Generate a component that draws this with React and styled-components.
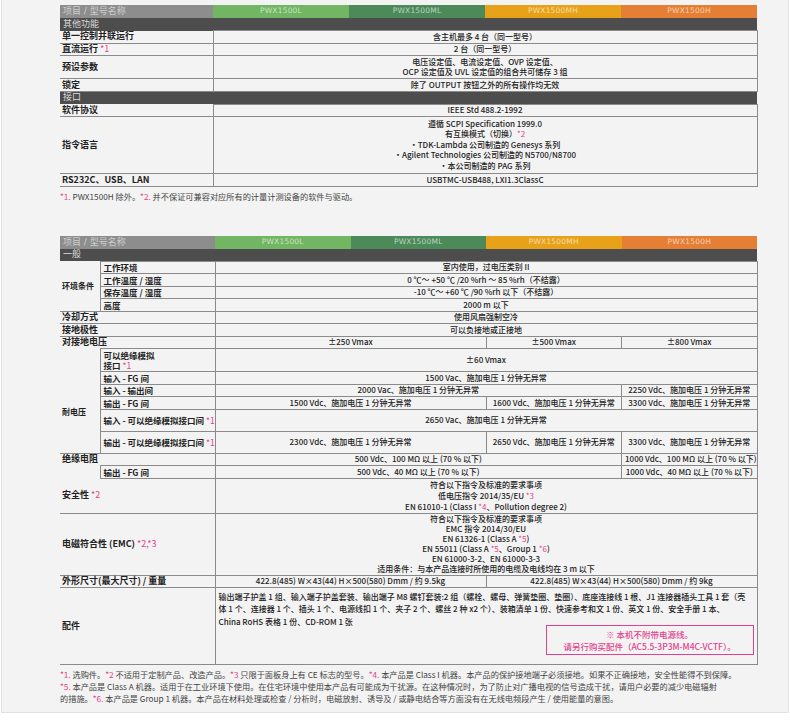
import React from 'react'
import styled, { createGlobalStyle } from 'styled-components'

const GlobalStyle = createGlobalStyle`
  html, body {
    margin: 0;
    background: #fff;
  }
  body {
    font-family: "Noto Sans CJK SC", "Noto Sans", sans-serif;
    color: #222;
  }
`

const LINE = '#8a8a8a'
const PINK = '#e4408c'

const Page = styled.div`
  box-sizing: border-box;
  width: 788px;
  min-height: 708px;
  margin-left: 1px;
  padding: 5px 0 8px 58px;
  background: #f3f3f3;
  border: 1px solid #e2e2e2;
  border-top: none;
`

const Spec = styled.table`
  width: 697px;
  table-layout: fixed;
  border-collapse: collapse;
  font-size: 9px;
  line-height: 10.5px;
  margin-top: ${p => p.$gap || 0}px;
`

const Col = styled.col`
  width: ${p => p.$w}px;
`

const Head = styled.th`
  height: 13px;
  padding: 0 3px;
  background: ${p => p.$bg};
  color: ${p => p.$fg || 'rgba(255, 255, 255, 0.62)'};
  font-family: "DejaVu Sans", "Noto Sans CJK SC", sans-serif;
  font-size: ${p => (p.$left ? 9 : 7.5)}px;
  font-weight: 400;
  letter-spacing: ${p => (p.$left ? 0 : 0.2)}px;
  text-align: ${p => (p.$left ? 'left' : 'center')};
`

const Section = styled.td`
  height: 12px;
  padding: 0 3px;
  background: #4d4d4d;
  color: #dcdcdc;
  font-weight: 400;
`

const Label = styled.td`
  padding: 0.5px 2px;
  font-weight: 700;
  font-size: ${p => (p.$group ? 8 : 9)}px;
  text-align: left;
  white-space: nowrap;
  vertical-align: middle;
  border-bottom: ${p => (p.$open ? 'none' : `1px solid ${LINE}`)};
  border-right: 1px solid ${LINE};
`

const Blank = styled.td`
  padding: 0;
`

const SubLabel = styled.td`
  height: ${p => p.$h || 'auto'};
  padding: 0.5px 3px;
  font-size: 8.5px;
  font-weight: 700;
  text-align: left;
  white-space: nowrap;
  border: 1px solid ${LINE};
`

const Value = styled.td`
  height: ${p => p.$h || 'auto'};
  padding: 0.5px 3px;
  font-size: 8px;
  font-weight: 500;
  text-align: ${p => (p.$left ? 'left' : 'center')};
  vertical-align: ${p => (p.$top ? 'top' : 'middle')};
  line-height: ${p => p.$lh || '10.5px'};
  border: 1px solid ${LINE};
  white-space: nowrap;
`

const Mark = styled.span`
  color: ${PINK};
  font-weight: 400;
`

const Notes = styled.div`
  width: 697px;
  margin-top: ${p => p.$gap}px;
  font-size: 8.2px;
  line-height: 12px;
  color: #444;
  white-space: nowrap;
`

const Line = styled.div``

const Accessory = styled.div`
  display: flex;
  flex-direction: column;
  padding: 2px 0 8px;
  line-height: 12.5px;
`

const Notice = styled.div`
  align-self: flex-end;
  width: 206px;
  margin: -3px 0 0;
  padding: 2px 0;
  border: 1px solid ${PINK};
  color: ${PINK};
  font-size: 8.5px;
  text-align: center;
  line-height: 12px;
`

const models = [
  { name: 'PWX1500L', bg: '#72b663' },
  { name: 'PWX1500ML', bg: '#4c8a5a' },
  { name: 'PWX1500MH', bg: '#e8a219' },
  { name: 'PWX1500H', bg: '#e57f35' },
]

const HeaderRow = () => (
  <tr>
    <Head colSpan={2} $bg="#8d8d8d" $fg="#cdcdcd" $left>
      项目 / 型号名称
    </Head>
    {models.map(m => (
      <Head key={m.name} $bg={m.bg}>
        {m.name}
      </Head>
    ))}
  </tr>
)

const Cols = ({ sub }) => (
  <colgroup>
    <Col $w={40} />
    <Col $w={sub} />
    {[0, 1, 2, 3].map(i => (
      <Col key={i} $w={(697 - 40 - sub) / 4} />
    ))}
  </colgroup>
)

const withstand = '施加电压 1 分钟无异常'

const FirstTable = () => (
  <Spec>
    <Cols sub={113} />
    <tbody>
      <HeaderRow />
      <tr>
        <Section colSpan={6}>其他功能</Section>
      </tr>
      <tr>
        <Label colSpan={2}>单一控制并联运行</Label>
        <Value colSpan={4}>含主机最多 4 台（同一型号）</Value>
      </tr>
      <tr>
        <Label colSpan={2}>
          直流运行 <Mark>*1</Mark>
        </Label>
        <Value colSpan={4}>2 台（同一型号）</Value>
      </tr>
      <tr>
        <Label colSpan={2}>预设参数</Label>
        <Value colSpan={4}>
          电压设定值、电流设定值、OVP 设定值、
          <br />
          OCP 设定值及 UVL 设定值的组合共可储存 3 组
        </Value>
      </tr>
      <tr>
        <Label colSpan={2}>锁定</Label>
        <Value colSpan={4}>除了 OUTPUT 按钮之外的所有操作均无效</Value>
      </tr>
      <tr>
        <Section colSpan={6}>接口</Section>
      </tr>
      <tr>
        <Label colSpan={2}>软件协议</Label>
        <Value colSpan={4}>IEEE Std 488.2-1992</Value>
      </tr>
      <tr>
        <Label colSpan={2}>指令语言</Label>
        <Value colSpan={4} $h="55px">
          遵循 SCPI Specification 1999.0
          <br />
          有互换模式（切换）<Mark>*2</Mark>
          <br />
          ·TDK-Lambda 公司制造的 Genesys 系列
          <br />
          ·Agilent Technologies 公司制造的 N5700/N8700
          <br />
          ·本公司制造的 PAG 系列
        </Value>
      </tr>
      <tr>
        <Label colSpan={2}>RS232C、USB、LAN</Label>
        <Value colSpan={4}>USBTMC-USB488, LXI1.3ClassC</Value>
      </tr>
    </tbody>
  </Spec>
)

const SecondTable = () => (
  <Spec $gap={34}>
    <Cols sub={115} />
    <tbody>
      <HeaderRow />
      <tr>
        <Section colSpan={6}>一般</Section>
      </tr>
      <tr>
        <Label rowSpan={4} $group>
          环境条件
        </Label>
        <SubLabel>工作环境</SubLabel>
        <Value colSpan={4}>室内使用，过电压类别 II</Value>
      </tr>
      <tr>
        <SubLabel>工作温度 / 湿度</SubLabel>
        <Value colSpan={4}>0 ℃～ +50 ℃ /20 %rh ～ 85 %rh（不结露）</Value>
      </tr>
      <tr>
        <SubLabel>保存温度 / 湿度</SubLabel>
        <Value colSpan={4}>-10 ℃～ +60 ℃ /90 %rh 以下（不结露）</Value>
      </tr>
      <tr>
        <SubLabel>高度</SubLabel>
        <Value colSpan={4}>2000 m 以下</Value>
      </tr>
      <tr>
        <Label colSpan={2}>冷却方式</Label>
        <Value colSpan={4}>使用风扇强制空冷</Value>
      </tr>
      <tr>
        <Label colSpan={2}>接地极性</Label>
        <Value colSpan={4}>可以负接地或正接地</Value>
      </tr>
      <tr>
        <Label colSpan={2} $open>
          对接地电压
        </Label>
        <Value colSpan={2}>±250 Vmax</Value>
        <Value>±500 Vmax</Value>
        <Value>±800 Vmax</Value>
      </tr>
      <tr>
        <Blank />
        <SubLabel $h="20px">
          可以绝缘模拟
          <br />
          接口 <Mark>*1</Mark>
        </SubLabel>
        <Value colSpan={4}>±60 Vmax</Value>
      </tr>
      <tr>
        <Label rowSpan={5} $group>
          耐电压
        </Label>
        <SubLabel>输入 - FG 间</SubLabel>
        <Value colSpan={4}>1500 Vac、{withstand}</Value>
      </tr>
      <tr>
        <SubLabel>输入 - 输出间</SubLabel>
        <Value colSpan={3}>2000 Vac、{withstand}</Value>
        <Value>2250 Vdc、{withstand}</Value>
      </tr>
      <tr>
        <SubLabel>输出 - FG 间</SubLabel>
        <Value colSpan={2}>1500 Vdc、{withstand}</Value>
        <Value>1600 Vdc、{withstand}</Value>
        <Value>3300 Vdc、{withstand}</Value>
      </tr>
      <tr>
        <SubLabel $h="20px">
          输入 - 可以绝缘模拟接口间 <Mark>*1</Mark>
        </SubLabel>
        <Value colSpan={4}>2650 Vac、{withstand}</Value>
      </tr>
      <tr>
        <SubLabel $h="20px">
          输出 - 可以绝缘模拟接口间 <Mark>*1</Mark>
        </SubLabel>
        <Value colSpan={2}>2300 Vdc、{withstand}</Value>
        <Value>2650 Vdc、{withstand}</Value>
        <Value>3300 Vdc、{withstand}</Value>
      </tr>
      <tr>
        <Label colSpan={2} $open>
          绝缘电阻
        </Label>
        <Value colSpan={3}>500 Vdc、100 MΩ 以上 (70 % 以下)</Value>
        <Value>1000 Vdc、100 MΩ 以上 (70 % 以下)</Value>
      </tr>
      <tr>
        <Blank />
        <SubLabel>输出 - FG 间</SubLabel>
        <Value colSpan={3}>500 Vdc、40 MΩ 以上 (70 % 以下)</Value>
        <Value>1000 Vdc、40 MΩ 以上 (70 % 以下)</Value>
      </tr>
      <tr>
        <Label colSpan={2}>
          安全性 <Mark>*2</Mark>
        </Label>
        <Value colSpan={4} $lh="11px" $h="33px">
          符合以下指令及标准的要求事项
          <br />
          低电压指令 2014/35/EU <Mark>*3</Mark>
          <br />
          EN 61010-1 (Class I <Mark>*4</Mark>、Pollution degree 2)
        </Value>
      </tr>
      <tr>
        <Label colSpan={2}>
          电磁符合性 (EMC) <Mark>*2,*3</Mark>
        </Label>
        <Value colSpan={4} $lh="10px" $h="59px">
          符合以下指令及标准的要求事项
          <br />
          EMC 指令 2014/30/EU
          <br />
          EN 61326-1 (Class A <Mark>*5</Mark>)
          <br />
          EN 55011 (Class A <Mark>*5</Mark>、Group 1 <Mark>*6</Mark>)
          <br />
          EN 61000-3-2、EN 61000-3-3
          <br />
          适用条件：与本产品连接时所使用的电缆及电线均在 3 m 以下
        </Value>
      </tr>
      <tr>
        <Label colSpan={2}>外形尺寸(最大尺寸) / 重量</Label>
        <Value colSpan={2}>422.8(485) W×43(44) H×500(580) Dmm / 约 9.5kg</Value>
        <Value colSpan={2}>422.8(485) W×43(44) H×500(580) Dmm / 约 9kg</Value>
      </tr>
      <tr>
        <Label colSpan={2}>配件</Label>
        <Value colSpan={4} $left $top>
          <Accessory>
            <Line>
              输出端子护盖 1 组、输入端子护盖套装、输出端子 M8 螺钉套装:2 组（螺栓、螺母、弹簧垫圈、垫圈）、底座连接线 1 根、J1 连接器插头工具 1 套（壳
            </Line>
            <Line>
              体 1 个、连接器 1 个、插头 1 个、电源线扣 1 个、夹子 2 个、螺丝 2 种 x2 个）、装箱清单 1 份、快速参考和文 1 份、英文 1 份、安全手册 1 本、
            </Line>
            <Line>China RoHS 表格 1 份、CD-ROM 1 张</Line>
            <Notice>
              ※ 本机不附带电源线。
              <br />
              请另行购买配件（AC5.5-3P3M-M4C-VCTF）。
            </Notice>
          </Accessory>
        </Value>
      </tr>
    </tbody>
  </Spec>
)

export default function App() {
  return (
    <>
      <GlobalStyle />
      <Page>
        <FirstTable />
        <Notes $gap={3}>
          <Mark>*1. </Mark>PWX1500H 除外。<Mark>*2. </Mark>
          并不保证可兼容对应所有的计量计测设备的软件与驱动。
        </Notes>
        <SecondTable />
        <Notes $gap={3}>
          <Line>
            <Mark>*1. </Mark>选购件。<Mark>*2 </Mark>不适用于定制产品、改造产品。
            <Mark>*3 </Mark>只限于面板身上有 CE 标志的型号。<Mark>*4. </Mark>
            本产品是 Class I 机器。本产品的保护接地端子必须接地。如果不正确接地，安全性能得不到保障。
          </Line>
          <Line>
            <Mark>*5. </Mark>
            本产品是 Class A 机器。适用于在工业环境下使用。在住宅环境中使用本产品有可能成为干扰源。在这种情况时，为了防止对广播电视的信号造成干扰，请用户必要的减少电磁辐射
          </Line>
          <Line>
            的措施。<Mark>*6. </Mark>
            本产品是 Group 1 机器。本产品在材料处理或检查 / 分析时，电磁放射、诱导及 / 或静电结合等方面没有在无线电频段产生 / 使用能量的意图。
          </Line>
        </Notes>
      </Page>
    </>
  )
}
